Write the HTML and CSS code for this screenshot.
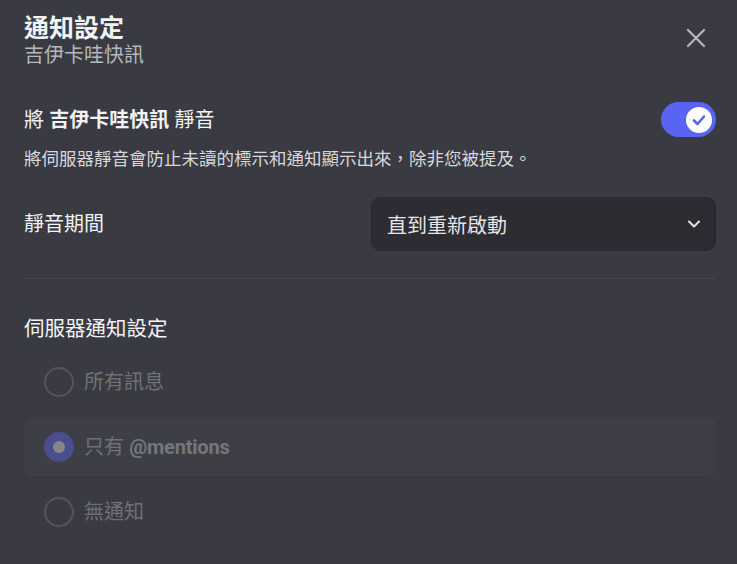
FILE: index.html
```html
<!DOCTYPE html>
<html lang="zh-Hant">
<head>
<meta charset="utf-8">
<link rel="stylesheet" href="styles.css">
</head>
<body>
<div class="modal">
  <header class="header">
    <div class="titles">
      <h1 class="title">通知設定</h1>
      <div class="subtitle">吉伊卡哇快訊</div>
    </div>
    <button class="close" aria-label="關閉">
      <svg width="20" height="20" viewBox="0 0 20 20"><path d="M2 2 L18 18 M18 2 L2 18" stroke="#b5b7bc" stroke-width="2.2" stroke-linecap="round" fill="none"/></svg>
    </button>
  </header>

  <div class="mute-row">
    <div class="mute-label">將 <strong>吉伊卡哇快訊</strong> 靜音</div>
    <div class="toggle">
      <div class="knob">
        <svg width="16" height="16" viewBox="0 0 16 16"><path d="M3 8.5 L6.5 12 L13 4.5" stroke="#5865f2" stroke-width="2.6" fill="none" stroke-linecap="round" stroke-linejoin="round"/></svg>
      </div>
    </div>
  </div>
  <p class="desc">將伺服器靜音會防止未讀的標示和通知顯示出來，除非您被提及。</p>

  <div class="duration-row">
    <div class="duration-label">靜音期間</div>
    <div class="select">
      <span>直到重新啟動</span>
      <svg width="14" height="10" viewBox="0 0 14 10"><path d="M2 2.5 L7 7.5 L12 2.5" stroke="#e3e4e6" stroke-width="2" fill="none" stroke-linecap="round" stroke-linejoin="round"/></svg>
    </div>
  </div>

  <div class="divider"></div>

  <h2 class="section-title">伺服器通知設定</h2>
  <div class="radio-group">
    <div class="radio-item">
      <span class="radio"></span>
      <span class="radio-text">所有訊息</span>
    </div>
    <div class="radio-item selected">
      <span class="radio on"><span class="dot"></span></span>
      <span class="radio-text">只有 <b>@mentions</b></span>
    </div>
    <div class="radio-item">
      <span class="radio"></span>
      <span class="radio-text">無通知</span>
    </div>
  </div>
</div>
</body>
</html>
```

FILE: styles.css
```css
* { box-sizing: border-box; }
html, body {
  margin: 0;
  padding: 0;
}
body {
  width: 737px;
  height: 564px;
  overflow: hidden;
  background: #393a42;
  font-family: "Noto Sans", "Noto Sans CJK TC", sans-serif;
  color: #f2f3f5;
}
.modal {
  padding: 11px 21px 0 24px;
}
.header {
  display: flex;
  justify-content: space-between;
  align-items: flex-start;
}
.title {
  margin: 0;
  font-size: 25px;
  line-height: 32px;
  font-weight: 700;
  color: #f2f3f5;
}
.subtitle {
  font-size: 20px;
  line-height: 24px;
  color: #b5b8bd;
}
.close {
  margin: 13px 6px 0 0;
  width: 28px;
  height: 28px;
  padding: 0;
  border: 0;
  background: transparent;
  display: flex;
  align-items: center;
  justify-content: center;
}
.mute-row {
  margin-top: 35px;
  display: flex;
  justify-content: space-between;
  align-items: center;
}
.mute-label {
  font-size: 20px;
  line-height: 24px;
  color: #f2f3f5;
}
.mute-label strong { font-weight: 700; }
.toggle {
  width: 55px;
  height: 35px;
  border-radius: 18px;
  background: #5865f2;
  display: flex;
  align-items: center;
  justify-content: flex-end;
  padding-right: 4px;
}
.knob {
  width: 26px;
  height: 26px;
  border-radius: 50%;
  background: #fff;
  display: flex;
  align-items: center;
  justify-content: center;
}
.desc {
  margin: 10px 0 0;
  font-size: 17.5px;
  line-height: 22px;
  color: #d6d8dc;
}
.duration-row {
  margin-top: 28px;
  display: flex;
  justify-content: space-between;
  align-items: center;
}
.duration-label {
  font-size: 20px;
  line-height: 24px;
  color: #f2f3f5;
}
.select {
  width: 345px;
  height: 54px;
  background: #2c2c32;
  border: 1px solid #26272c;
  border-radius: 10px;
  display: flex;
  align-items: center;
  justify-content: space-between;
  padding: 0 14px 0 15px;
  font-size: 20px;
  color: #e3e4e6;
}
.divider {
  margin-top: 27px;
  height: 1px;
  background: #45464e;
}
.section-title {
  margin: 36px 0 0;
  font-size: 20.5px;
  line-height: 26px;
  font-weight: 400;
  color: #f2f3f5;
}
.radio-group {
  margin-top: 12px;
  display: flex;
  flex-direction: column;
  gap: 7px;
}
.radio-item {
  height: 58px;
  border-radius: 8px;
  display: flex;
  align-items: center;
  padding-left: 20px;
  gap: 10px;
}
.radio-item.selected {
  background: #3d3e46;
}
.radio {
  width: 30px;
  height: 30px;
  border-radius: 50%;
  border: 2px solid #54555c;
  display: flex;
  align-items: center;
  justify-content: center;
}
.radio.on {
  border: 0;
  background: #4a4e8f;
}
.dot {
  width: 12px;
  height: 12px;
  border-radius: 50%;
  background: #878789;
}
.radio-text {
  font-size: 20px;
  line-height: 24px;
  color: #707176;
}
.radio-text b {
  font-family: Roboto, "Noto Sans", sans-serif;
  font-weight: 700;
  letter-spacing: -0.2px;
  color: #75767b;
}
```
